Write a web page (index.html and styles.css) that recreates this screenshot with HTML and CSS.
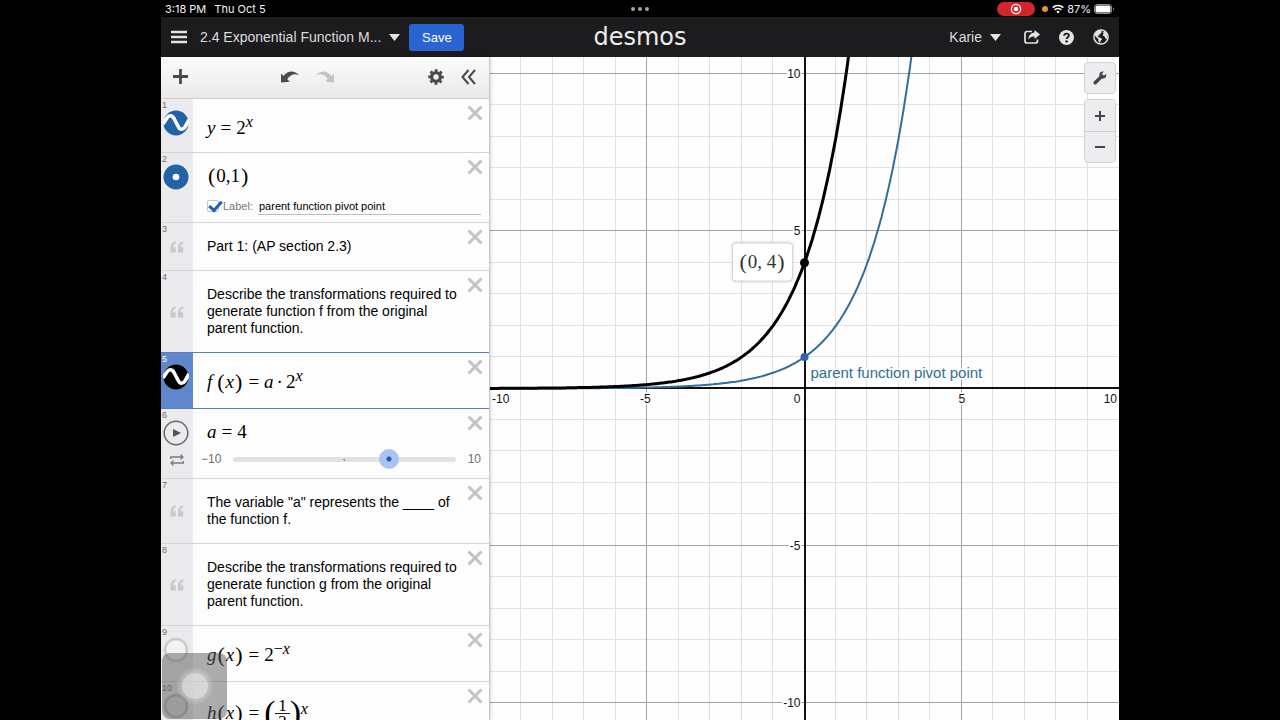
FILE: index.html
```html
<!DOCTYPE html>
<html lang="en">
<head>
  <meta charset="UTF-8">
  <meta name="viewport" content="width=device-width, initial-scale=1.0">
  <title>Desmos | Graphing Calculator</title>
  <link rel="stylesheet" href="styles.css">
</head>
<body>

  <!-- Shared icons -->
  <svg class="defs" width="0" height="0">
    <symbol id="close" viewBox="0 0 16 16"><path d="M1.500 1.500L14.500 14.500M14.500 1.500L1.500 14.500" fill="none" stroke="#c3c3c5" stroke-width="3"/></symbol>
    <symbol id="quote" viewBox="0 0 14 12"><path d="M5.800.3C2.300.8.500 3.500.500 7v4.500h5.200V6.200H2.900C3 4.200 4 3 5.800 2.500zM13.300.3C9.800.8 8 3.500 8 7v4.500h5.200V6.200h-2.800c.1-2 1.100-3.200 2.900-3.700z" fill="#c9c9cb"/></symbol>
    <symbol id="wave" viewBox="0 0 26 26"><circle cx="13" cy="13" r="12.500" fill="currentColor"/><path d="M0 14L4 8C6 5 9 5 11 8.500L15.500 17C17 20 20 20 22 17L26 10" fill="none" stroke="#fff" stroke-width="3.600"/></symbol>
  </svg>

  <div class="device">
    <!-- Status bar -->
    <div class="status">
      <div class="status-left"><span>3:18 PM</span><span>Thu Oct 5</span></div>
      <svg width="18" height="4" viewBox="0 0 18 4" fill="#a5a5a5"><circle cx="2" cy="2" r="2"/><circle cx="9" cy="2" r="2"/><circle cx="16" cy="2" r="2"/></svg>
      <div class="status-right">
        <span class="recording"><svg width="12" height="12" viewBox="0 0 12 12"><circle cx="6" cy="6" r="4.600" fill="none" stroke="#fff" stroke-width="1.300"/><circle cx="6" cy="6" r="2.200" fill="#fff"/></svg></span>
        <span class="mic-dot"></span>
        <svg class="wifi" width="12" height="10" viewBox="0 0 12 10" fill="none" stroke="#fff" stroke-width="1.700"><path d="M.7 3.700a7.500 7.500 0 0 1 10.600 0M2.600 5.900a4.800 4.800 0 0 1 6.800 0"/><path d="M4.300 7.500a2.500 2.500 0 0 1 3.400 0L6 9.400z" fill="#fff" stroke="none"/></svg>
        <span>87%</span>
        <svg width="21" height="10" viewBox="0 0 21 10"><rect x=".5" y=".5" width="17" height="9" rx="2.500" fill="none" stroke="#8b8b8b"/><rect x="1.500" y="1.500" width="15" height="7" rx="1.500" fill="#fff"/><path d="M19 3.200c1.300.4 1.300 3.200 0 3.600z" fill="#8b8b8b"/></svg>
      </div>
    </div>

    <!-- Header -->
    <header class="header">
      <div class="header-left">
        <button class="icon-btn" aria-label="Menu"><svg width="16" height="14" viewBox="0 0 16 14" stroke="#e4e4e4" stroke-width="2.400"><path d="M0 2h16M0 7h16M0 12h16"/></svg></button>
        <button class="title-btn">2.4 Exponential Function M... <svg width="11" height="7" viewBox="0 0 11 7"><path d="M0 0h11L5.500 7z" fill="#e4e4e4"/></svg></button>
        <button class="save-btn">Save</button>
      </div>
      <a class="logo" href="#">desmos</a>
      <div class="header-right">
        <button class="user-btn">Karie <svg width="11" height="7" viewBox="0 0 11 7"><path d="M0 0h11L5.500 7z" fill="#e4e4e4"/></svg></button>
        <button class="icon-btn" aria-label="Share"><svg width="16" height="14" viewBox="0 0 16 14"><path d="M8 1.500H3A2 2 0 0 0 1 3.500v7.500a2 2 0 0 0 2 2h8.500a2 2 0 0 0 2-2V9.500" fill="none" stroke="#e4e4e4" stroke-width="1.700"/><path d="M10.500 0L16 4.500L10.500 9V6.500C7.500 6.300 5.800 7.300 4.300 9.800C4.500 5.800 6.500 3 10.500 2.600z" fill="#e4e4e4"/></svg></button>
        <button class="icon-btn" aria-label="Help"><svg width="15" height="15" viewBox="0 0 15 15"><circle cx="7.500" cy="7.500" r="7.500" fill="#e4e4e4"/><path d="M5.200 5.700C5.200 2.900 9.900 3 9.900 5.500C9.900 7.200 7.600 7.100 7.600 9.100" fill="none" stroke="#1c1b1e" stroke-width="1.900"/><circle cx="7.600" cy="11.400" r="1.200" fill="#1c1b1e"/></svg></button>
        <button class="icon-btn" aria-label="Language"><svg width="16" height="16" viewBox="0 0 16 16"><circle cx="8" cy="8" r="7.100" fill="none" stroke="#e4e4e4" stroke-width="1.500"/><path d="M3 3.300L6.200 1.300L8.800 2.200L8.300 4L6.500 5.200L6.300 6.500L4.500 6.800L5.500 8.300L8.200 9L9 10.500L7.500 12L6.800 14.500L5.500 12.500L5.300 10L2.500 7.500L1.500 5zM10 3L12.500 3L14.500 6.500L14 10L12.300 9.300L11.500 7.300L9.700 6.500L10.500 4.500z" fill="#e4e4e4"/></svg></button>
      </div>
    </header>

    <main class="workspace">
      <!-- Expression list -->
      <section class="panel">
        <div class="toolbar">
          <button class="icon-btn" aria-label="Add item"><svg width="15" height="15" viewBox="0 0 15 15" stroke="#4a4a4c" stroke-width="2.800"><path d="M7.500 0v15M0 7.500h15"/></svg></button>
          <div class="history">
            <button class="icon-btn" aria-label="Undo"><svg width="18" height="12" viewBox="0 0 18 12"><path d="M0 2.500L2.600 5C7-.8 13.500-.8 18 4.300C13.500 2.100 9.600 3.500 6.200 8L8.700 10.700L0 11.500z" fill="#4a4a4c"/></svg></button>
            <button class="icon-btn" aria-label="Redo" disabled><svg width="18" height="12" viewBox="0 0 18 12"><path d="M18 2.500L15.400 5C11-.8 4.500-.8 0 4.300C4.500 2.100 8.400 3.500 11.800 8L9.300 10.700L18 11.500z" fill="#c4c4c6"/></svg></button>
          </div>
          <div class="panel-tools">
            <button class="icon-btn" aria-label="Edit list"><svg width="16" height="16" viewBox="0 0 16 16"><circle cx="8" cy="8" r="4.400" fill="none" stroke="#4a4a4c" stroke-width="3.400"/><circle cx="8" cy="8" r="6.700" fill="none" stroke="#4a4a4c" stroke-width="2.200" stroke-dasharray="2.900 2.362" stroke-dashoffset="1.450"/></svg></button>
            <button class="icon-btn" aria-label="Hide list"><svg width="15" height="16" viewBox="0 0 15 16" fill="none" stroke="#4a4a4c" stroke-width="2"><path d="M7.500 1L1.500 8l6 7M14 1L8 8l6 7"/></svg></button>
          </div>
        </div>

        <ol class="expressions">
          <li class="row">
            <div class="gutter"><span class="num">1</span><svg class="badge blue" width="26" height="26"><use href="#wave"/></svg></div>
            <div class="content"><div class="math"><i>y</i><span class="op">=</span>2<sup><i>x</i></sup></div></div>
            <button class="close" aria-label="Delete 1"><svg width="16" height="16"><use href="#close"/></svg></button>
          </li>
          <li class="row tall">
            <div class="gutter"><span class="num">2</span><svg class="badge" width="26" height="26"><circle cx="13" cy="13" r="12.500" fill="#2263a6"/><circle cx="13" cy="13" r="3.300" fill="#fff"/></svg></div>
            <div class="content">
              <div class="math"><span class="paren">(</span>0,1<span class="paren">)</span></div>
              <div class="point-label">
                <label><input type="checkbox" checked>Label:</label>
                <input type="text" aria-label="Point label" value="parent function pivot point">
              </div>
            </div>
            <button class="close" aria-label="Delete 2"><svg width="16" height="16"><use href="#close"/></svg></button>
          </li>
          <li class="row note">
            <div class="gutter"><span class="num">3</span><svg width="14" height="12"><use href="#quote"/></svg></div>
            <p class="content">Part 1: (AP section 2.3)</p>
            <button class="close" aria-label="Delete 3"><svg width="16" height="16"><use href="#close"/></svg></button>
          </li>
          <li class="row note">
            <div class="gutter"><span class="num">4</span><svg width="14" height="12"><use href="#quote"/></svg></div>
            <p class="content">Describe the transformations required to generate function f from the original parent function.</p>
            <button class="close" aria-label="Delete 4"><svg width="16" height="16"><use href="#close"/></svg></button>
          </li>
          <li class="row active">
            <div class="gutter"><span class="num">5</span><svg class="badge" width="26" height="26"><use href="#wave"/></svg></div>
            <div class="content"><div class="math"><i class="func">f</i><span class="paren">(</span><i>x</i><span class="paren">)</span><span class="op">=</span><i>a</i><span class="dot">·</span>2<sup><i>x</i></sup></div></div>
            <button class="close" aria-label="Delete 5"><svg width="16" height="16"><use href="#close"/></svg></button>
          </li>
          <li class="row tall">
            <div class="gutter"><span class="num">6</span>
              <button class="badge" aria-label="Play"><svg width="26" height="26"><circle cx="13" cy="13" r="11.800" fill="none" stroke="#69696b" stroke-width="1.500"/><path d="M10 9l8 4-8 4z" fill="#555557"/></svg></button>
              <svg class="loop" width="14" height="12" viewBox="0 0 14 12" fill="none" stroke="#7b7b7d" stroke-width="1.300"><path d="M.7 5V3H13M10.500.5L13 3l-2.500 2.500M13.300 7v2H1M3.500 6.500L1 9l2.500 2.500"/></svg>
            </div>
            <div class="content">
              <div class="math"><i>a</i><span class="op">=</span>4</div>
              <div class="slider"><span>−10</span><div class="track"><input type="range" min="-10" max="10" value="4" aria-label="a"></div><span>10</span></div>
            </div>
            <button class="close" aria-label="Delete 6"><svg width="16" height="16"><use href="#close"/></svg></button>
          </li>
          <li class="row note">
            <div class="gutter"><span class="num">7</span><svg width="14" height="12"><use href="#quote"/></svg></div>
            <p class="content">The variable "a" represents the ____ of the function f.</p>
            <button class="close" aria-label="Delete 7"><svg width="16" height="16"><use href="#close"/></svg></button>
          </li>
          <li class="row note">
            <div class="gutter"><span class="num">8</span><svg width="14" height="12"><use href="#quote"/></svg></div>
            <p class="content">Describe the transformations required to generate function g from the original parent function.</p>
            <button class="close" aria-label="Delete 8"><svg width="16" height="16"><use href="#close"/></svg></button>
          </li>
          <li class="row">
            <div class="gutter"><span class="num">9</span><svg class="badge" width="26" height="26"><circle cx="13" cy="13" r="11" fill="#f3f3f5" stroke="#c9c9cb" stroke-width="2.500"/></svg></div>
            <div class="content"><div class="math"><i>g</i><span class="paren">(</span><i>x</i><span class="paren">)</span><span class="op">=</span>2<sup>−<i>x</i></sup></div></div>
            <button class="close" aria-label="Delete 9"><svg width="16" height="16"><use href="#close"/></svg></button>
          </li>
          <li class="row">
            <div class="gutter"><span class="num">10</span><svg class="badge" width="26" height="26"><circle cx="13" cy="13" r="11" fill="#dcdcde" stroke="#b9b9bb" stroke-width="2.500"/></svg></div>
            <div class="content"><div class="math frac-line"><i>h</i><span class="paren">(</span><i>x</i><span class="paren">)</span><span class="op">=</span><span class="big-paren">(</span><span class="frac"><span>1</span><span>2</span></span><span class="big-paren">)</span><sup><i>x</i></sup></div></div>
            <button class="close" aria-label="Delete 10"><svg width="16" height="16"><use href="#close"/></svg></button>
          </li>
        </ol>
        <div class="assistive"><svg width="48" height="48" viewBox="0 0 48 48"><circle cx="24" cy="24" r="18" fill="#fff" fill-opacity=".1"/><circle cx="24" cy="24" r="16" fill="#fff" fill-opacity=".12"/><circle cx="24" cy="24" r="13" fill="#fff" fill-opacity=".4"/></svg></div>
      </section>

      <!-- Graph -->
      <section class="graph" id="graph">
        <svg id="plot" width="100%" height="100%"></svg>
        <div class="trace math" id="trace"><span class="paren">(</span>0, 4<span class="paren">)</span></div>
        <div class="graph-tools">
          <button class="tool-btn" aria-label="Graph settings"><svg width="14" height="14" viewBox="0 0 14 14"><path d="M2.200 11.800L9 5" stroke="#444446" stroke-width="3.400" stroke-linecap="round"/><path d="M12.900 3L10.800 5.100L8.900 4.800L8.700 3L10.800.8C7.900-.4 5.600 2.200 6.500 4.800L9 7.400C11.700 8.300 14.200 5.800 12.900 3z" fill="#444446"/></svg></button>
          <div class="zoom">
            <button class="tool-btn" aria-label="Zoom in"><svg width="12" height="12" stroke="#444446" stroke-width="2"><path d="M6 1v10M1 6h10"/></svg></button>
            <button class="tool-btn" aria-label="Zoom out"><svg width="12" height="12" stroke="#444446" stroke-width="2"><path d="M1 6h10"/></svg></button>
          </div>
        </div>
      </section>
    </main>
  </div>

  <script src="script.js"></script>
</body>
</html>
```

FILE: styles.css
```css
/* General */
* {
  box-sizing: border-box;
}

body {
  margin: 0;
  background: #000;
  font-family: "Liberation Sans", Arial, sans-serif;
}

button {
  padding: 0;
  border: none;
  background: none;
  color: inherit;
  font: inherit;
}

svg {
  display: block;
}

.defs {
  position: absolute;
}

.device {
  display: flex;
  flex-direction: column;
  height: 100vh;
  margin: 0 161px;
  overflow: hidden;
}

/* Status bar */
.status {
  display: grid;
  grid-template-columns: 1fr auto 1fr;
  align-items: center;
  height: 17px;
  padding: 0 4px;
  color: #f2f2f2;
  font-family: Inter, "Liberation Sans", sans-serif;
  font-size: 11px;
}

.status-left,
.status-right {
  display: flex;
  align-items: center;
  gap: 8px;
}

.status-right {
  justify-content: flex-end;
  gap: 3px;
}

.recording {
  display: flex;
  align-items: center;
  justify-content: center;
  width: 38px;
  height: 14px;
  border-radius: 7px;
  background: #d4252b;
}

.mic-dot {
  width: 6px;
  height: 6px;
  margin: 0 1px 0 4px;
  border-radius: 50%;
  background: #e8913a;
}

/* Header */
.header {
  display: grid;
  grid-template-columns: 1fr auto 1fr;
  align-items: center;
  height: 40px;
  padding: 0 10px;
  background: #1c1b1e;
  color: #dcdcdc;
  font-size: 14px;
}

.header-left,
.header-right {
  display: flex;
  align-items: center;
}

.header-left {
  gap: 13px;
}

.header-right {
  justify-content: flex-end;
  gap: 19px;
}

.title-btn,
.user-btn {
  display: flex;
  align-items: center;
  gap: 8px;
  white-space: nowrap;
}

.user-btn {
  margin-right: 4px;
}

.save-btn {
  width: 55px;
  height: 27px;
  margin-left: -4px;
  border-radius: 3px;
  background: #2a64d2;
  color: #fff;
  font-size: 13px;
}

.logo {
  color: #ececec;
  font-family: "DejaVu Sans", sans-serif;
  font-size: 24px;
  line-height: 38px;
  text-decoration: none;
}

/* Expression panel */
.workspace {
  display: flex;
  flex: 1;
  min-height: 0;
}

.panel {
  position: relative;
  z-index: 1;
  flex: 0 0 329px;
  overflow: hidden;
  border-right: 1px solid #c8c8cb;
  background: #fdfdfd;
  box-shadow: 0 0 4px rgba(0, 0, 0, 0.25);
}

.toolbar {
  display: grid;
  grid-template-columns: 1fr auto 1fr;
  align-items: center;
  height: 42px;
  padding: 0 13px 2px 12px;
  border-bottom: 1px solid #cfcfd2;
  background: linear-gradient(#fcfcfd, #e9e9eb);
}

.history,
.panel-tools {
  display: flex;
  align-items: center;
  gap: 17px;
}

.history {
  margin-right: 34px;
}

.panel-tools {
  justify-content: flex-end;
}

.expressions {
  margin: 0;
  padding: 0;
  list-style: none;
}

.row {
  position: relative;
  display: flex;
  min-height: 56px;
  border-bottom: 1px solid #d3d3d6;
}

.row:first-child {
  min-height: 54px;
}

.row.tall {
  min-height: 70px;
}

.gutter {
  position: relative;
  display: flex;
  flex: 0 0 32px;
  flex-direction: column;
  align-items: center;
  justify-content: center;
  background: #ebebee;
}

.num {
  position: absolute;
  top: 1px;
  left: 1px;
  color: #6c6c70;
  font-size: 9px;
  line-height: 10px;
}

.badge {
  position: absolute;
  top: 11px;
  left: 2px;
}

.blue {
  color: #2263a6;
}

.loop {
  position: absolute;
  bottom: 12px;
}

.close {
  position: absolute;
  top: 6px;
  right: 6px;
}

.content {
  flex: 1;
  min-width: 0;
  margin: 0;
  padding: 17px 8px 0 14px;
}

.tall .content {
  padding-top: 11px;
}

.note .content {
  padding: 15px 32px 15px 14px;
  font-size: 14px;
  line-height: 17px;
}

.row.note {
  min-height: 0;
}

.active {
  border-bottom-color: #5a7fb5;
  box-shadow: 0 -1px #5a7fb5;
}

.active .gutter {
  background: #5f87cb;
}

.active .num {
  color: #fff;
}

/* Math */
.math {
  display: flex;
  align-items: center;
  height: 24px;
  font-family: "Liberation Serif", "Times New Roman", serif;
  font-size: 19px;
}

.math sup {
  align-self: flex-start;
  font-size: 16px;
  line-height: 12px;
}

.op {
  margin: 0 5px;
}

.dot {
  margin: 0 3px;
}

.func {
  margin-right: 4px;
}

.paren {
  margin: 0 1px;
  font-size: 22px;
}

.math.frac-line {
  height: 28px;
}

.frac-line sup {
  margin-top: 4px;
}

.big-paren {
  width: 11px;
  font-size: 34px;
}

.frac {
  display: flex;
  flex-direction: column;
  font-size: 17px;
  line-height: 15px;
}

.frac span {
  padding: 0 3px;
}

.frac span + span {
  border-top: 1px solid #222;
}

/* Point label */
.point-label {
  display: flex;
  align-items: center;
  height: 18px;
  margin-top: 9px;
  color: #77777a;
  font-size: 11px;
}

.point-label label {
  display: flex;
  align-items: center;
  gap: 4px;
}

.point-label input[type="checkbox"] {
  appearance: none;
  position: relative;
  width: 12px;
  height: 12px;
  margin: 0;
  border: 1px solid #b9c7dd;
  border-radius: 2px;
}

.point-label input[type="checkbox"]:checked::after {
  content: "";
  position: absolute;
  top: 0;
  left: 1px;
  width: 10px;
  height: 5px;
  border: solid #1f5fb8;
  border-width: 0 0 3px 3px;
  transform: rotate(-48deg);
}

.point-label input[type="text"] {
  flex: 1;
  min-width: 0;
  height: 18px;
  margin-left: 5px;
  padding: 0 1px;
  border: none;
  border-bottom: 1px solid #bdbdc0;
  background: none;
  font: inherit;
  color: #000;
}

/* Slider */
.slider {
  display: flex;
  align-items: center;
  gap: 12px;
  height: 20px;
  margin: 5px 0 0 -6px;
  color: #6f6f72;
  font-size: 12px;
}

.track {
  position: relative;
  flex: 1;
  height: 5px;
  border-radius: 3px;
  background: radial-gradient(circle at center, #8c8c8f 1px, #e2e2e5 1px);
}

.track input {
  appearance: none;
  position: absolute;
  top: -8px;
  left: -9px;
  width: calc(100% + 18px);
  height: 20px;
  margin: 0;
  background: none;
}

.track input::-webkit-slider-thumb {
  appearance: none;
  width: 20px;
  height: 20px;
  border-radius: 50%;
  background: radial-gradient(circle, #2559a8 2px, #a7c4f2 3px);
}

.assistive {
  position: absolute;
  bottom: 1px;
  left: 1px;
  display: flex;
  align-items: center;
  justify-content: center;
  width: 65px;
  height: 66px;
  border-radius: 8px;
  background: rgba(92, 92, 92, 0.5);
}

/* Graph */
.graph {
  position: relative;
  flex: 1;
  min-width: 0;
  overflow: hidden;
  background: #fefefe;
}

.minor {
  stroke: #e1e1e3;
}

.major {
  stroke: #a3a3a5;
}

.axis {
  stroke: #111;
  stroke-width: 2;
}

.curve {
  fill: none;
  stroke: #000;
  stroke-width: 3;
}

.curve.parent {
  stroke: #2f6f9a;
  stroke-width: 2;
}

.tick {
  fill: #111;
  font-size: 12px;
  stroke: #fefefe;
  stroke-width: 3;
  paint-order: stroke;
}

.point-name {
  fill: #2f6f93;
  font-size: 15px;
  stroke: #fefefe;
  stroke-width: 3;
  paint-order: stroke;
}

.trace {
  position: absolute;
  justify-content: center;
  width: 61px;
  height: 39px;
  border: 1px solid #d5d5d8;
  border-radius: 4px;
  background: #fff;
  color: #333;
  box-shadow: 0 0 3px rgba(0, 0, 0, 0.15);
  transform: translate(-100%, -50%);
  white-space: pre;
}

.graph-tools {
  position: absolute;
  top: 5px;
  right: 3px;
  display: flex;
  flex-direction: column;
  gap: 5px;
}

.tool-btn {
  display: flex;
  align-items: center;
  justify-content: center;
  width: 32px;
  height: 32px;
  border: 1px solid #d2d2d4;
  border-radius: 4px;
  background: #ededef;
}

.zoom {
  border: 1px solid #d2d2d4;
  border-radius: 4px;
  background: #ededef;
}

.zoom .tool-btn {
  width: 30px;
  height: 31px;
  border: none;
}

.zoom .tool-btn + .tool-btn {
  border-top: 1px solid #d2d2d4;
  border-radius: 0 0 4px 4px;
}
```

FILE: script.js
```js
const graph = document.getElementById("graph");
const plot = document.getElementById("plot");
const trace = document.getElementById("trace");

function drawGraph() {
  const w = graph.clientWidth;
  const h = graph.clientHeight;
  const unit = w / 20;
  const cx = w / 2;
  const cy = h / 2;
  const px = x => cx + x * unit;
  const py = y => cy - y * unit;
  const rows = Math.ceil(h / 2 / unit);
  let minor = "", major = "", labels = "";

  // grid lines, every fifth one darker
  const line = (x1, y1, x2, y2, cls) =>
    `<line x1="${x1}" y1="${y1}" x2="${x2}" y2="${y2}" class="${cls}"/>`;
  const snap = v => Math.round(v) - 0.5;

  for (let i = -9; i < 10; i++) {
    if (i === 0) continue;
    const x = snap(px(i));
    if (i % 5 === 0) major += line(x, 0, x, h, "major");
    else minor += line(x, 0, x, h, "minor");
  }
  for (let j = -rows; j <= rows; j++) {
    if (j === 0) continue;
    const y = snap(py(j));
    if (j % 5 === 0) {
      major += line(0, y, w, y, "major");
      labels += `<text class="tick" x="${cx - 4}" y="${y + 4}" text-anchor="end">${j}</text>`;
    } else {
      minor += line(0, y, w, y, "minor");
    }
  }

  const ly = cy + 14;
  labels += `<text class="tick" x="2" y="${ly}">-10</text>`;
  labels += `<text class="tick" x="${px(-5) - 2}" y="${ly}" text-anchor="middle">-5</text>`;
  labels += `<text class="tick" x="${cx - 4}" y="${ly}" text-anchor="end">0</text>`;
  labels += `<text class="tick" x="${px(5)}" y="${ly}" text-anchor="middle">5</text>`;
  labels += `<text class="tick" x="${w - 2}" y="${ly}" text-anchor="end">10</text>`;

  function curve(a, cls) {
    let d = "";
    for (let x = -10; x <= 4; x += 0.05) {
      d += (d ? "L" : "M") + px(x).toFixed(1) + " " + py(a * Math.pow(2, x)).toFixed(1);
    }
    return `<path d="${d}" class="curve ${cls}"/>`;
  }

  plot.innerHTML = minor + major +
    line(0, Math.floor(cy), w, Math.floor(cy), "axis") +
    line(Math.round(cx), 0, Math.round(cx), h, "axis") +
    labels +
    curve(1, "parent") + curve(4, "") +
    `<circle cx="${cx}" cy="${py(1)}" r="4" fill="#2f63a6"/>` +
    `<circle cx="${cx}" cy="${py(4)}" r="4.5"/>` +
    `<text class="point-name" x="${cx + 6}" y="${py(1) + 21}">parent function pivot point</text>`;

  trace.style.left = (cx - 12) + "px";
  trace.style.top = (py(4) - 1) + "px";
}

drawGraph();
window.addEventListener("resize", drawGraph);
```
